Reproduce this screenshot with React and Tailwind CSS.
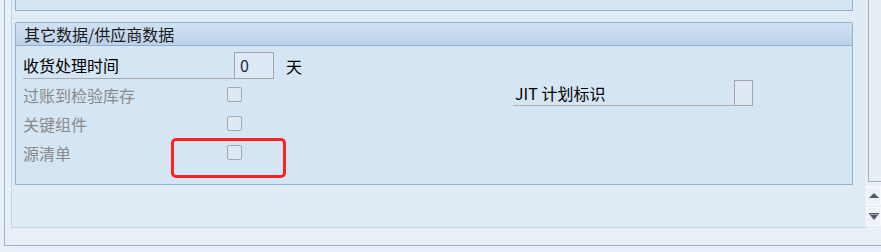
import React from "react";

const cjk = { fontFamily: '"Noto Sans CJK SC", "Noto Sans", sans-serif' };

function Checkbox() {
  return <span className="block w-[15px] h-[15px] rounded-[2px] border border-[#a4a9ae] bg-[#dfe9f3]" />;
}

function CheckRow({ label, children }) {
  return (
    <div className="flex items-center h-[29px]">
      <span className="w-[204px] text-[16px] leading-[20px] text-[#8a8a8a]">{label}</span>
      <Checkbox />
      {children}
    </div>
  );
}

function ScrollBar() {
  return (
    <div className="w-[15px] h-[228px] flex flex-col">
      <div className="ml-[2px] h-[182px] border-l border-b border-[#a3acb8] bg-[#e8eef6]" />
      <div className="mt-[4px] h-[19px] bg-[#eef2f7] border border-[#f7f9fb] flex items-center justify-center">
        <svg width="12" height="8" viewBox="0 0 12 8">
          <path d="M1 6 L6 1 L11 6 Z" fill="#4b5968" />
        </svg>
      </div>
      <div className="mt-[2px] h-[19px] bg-[#eef2f7] border border-[#f7f9fb] flex items-center justify-center">
        <svg width="12" height="8" viewBox="0 0 12 8">
          <rect x="1" y="0" width="10" height="1.5" fill="#4b5968" />
          <path d="M2 2 L10 2 L6 7 Z" fill="#4b5968" />
        </svg>
      </div>
    </div>
  );
}

export default function App() {
  return (
    <div className="w-[881px] h-[252px] bg-[#e9eff6] overflow-hidden" style={cjk}>
      <div className="ml-[4px] h-[246px] border-l border-b border-[#9ab3d3] flex">
        <div className="ml-[6px] w-[855px] h-[228px] border-l border-b border-[#c5d4e4] bg-[#dfebf5]">
          <div className="ml-[3px] w-[838px] h-[11px] border-l border-r border-b border-[#8fafd5] bg-[#d5e5f3]" />
          <div className="relative ml-[3px] mt-[11px] w-[838px] h-[163px] rounded-t-[2px] border border-[#8fafd5] bg-[#d4e5f3]">
            <div className="h-[23px] border-b border-[#8fafd5] bg-gradient-to-b from-[#d0e1f2] to-[#bcd2ea] pl-[8px] text-[16px] leading-[22px] text-[#1a1a1a]">
              其它数据/供应商数据
            </div>
            <div className="pl-[7px] pt-[6px]">
              <div className="flex items-center h-[27px]">
                <span className="w-[211px] h-[27px] border-b border-[#a9a9a9] text-[16px] leading-[26px] text-black">
                  收货处理时间
                </span>
                <span className="w-[40px] h-[27px] border border-[#a4a6a8] bg-[#dde9f4] pl-[5px] text-[16px] leading-[25px] text-[#1b1f4a]">
                  0
                </span>
                <span className="ml-[12px] text-[16px] leading-[20px] text-black">天</span>
              </div>
              <div className="h-[1px]" />
              <CheckRow label="过账到检验库存">
                <div className="ml-[271px] -mt-[3px] flex items-end h-[26px]">
                  <span className="w-[221px] border-b border-[#b0b0b0] text-[16px] leading-[24px] text-black pl-[2px]">
                    JIT 计划标识
                  </span>
                  <span className="w-[19px] h-[26px] border border-[#a4a6a8] bg-[#dfe9f3]" />
                </div>
              </CheckRow>
              <CheckRow label="关键组件" />
              <CheckRow label="源清单" />
            </div>
            <div className="absolute left-[155px] top-[115px] w-[115px] h-[40px] rounded-[5px] border-[3px] border-[#ff2020]" />
          </div>
        </div>
        <ScrollBar />
      </div>
    </div>
  );
}
